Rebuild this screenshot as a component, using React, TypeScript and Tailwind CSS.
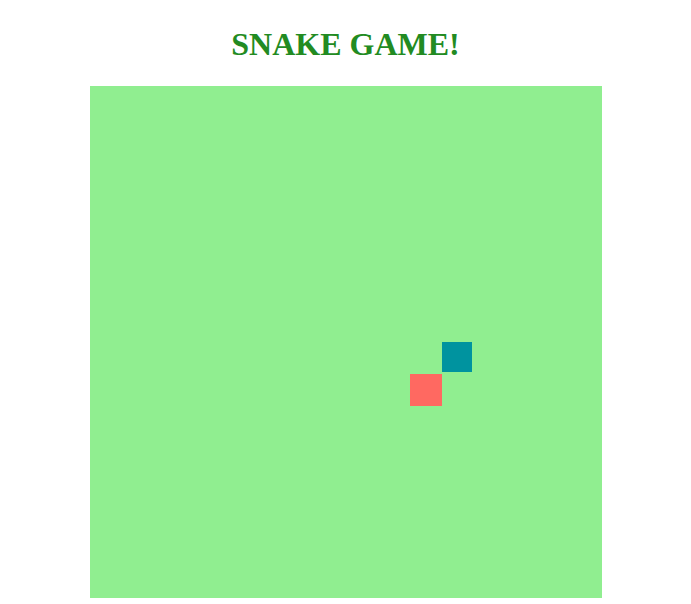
const CELL = 32;

// snake head and food positions on a 16x16 grid
const snake = [{ x: 11, y: 8 }];
const food = { x: 10, y: 9 };

export default function App() {
  return (
    <div className="flex flex-col items-center bg-white min-h-[604px] pt-[26px] font-['Liberation_Serif','Times_New_Roman',serif]">
      <h1 className="text-[32px] leading-[37px] font-bold text-[#228b22]">SNAKE GAME!</h1>
      <div className="relative mt-[23px] w-[512px] h-[512px] bg-[#90ee90]">
        {snake.map((s, i) => (
          <div
            key={i}
            className="absolute w-[30px] h-[30px] bg-[#00939f]"
            style={{ left: s.x * CELL, top: s.y * CELL }}
          />
        ))}
        <div
          className="absolute w-[32px] h-[32px] bg-[#ff6961]"
          style={{ left: food.x * CELL, top: food.y * CELL }}
        />
      </div>
    </div>
  );
}
